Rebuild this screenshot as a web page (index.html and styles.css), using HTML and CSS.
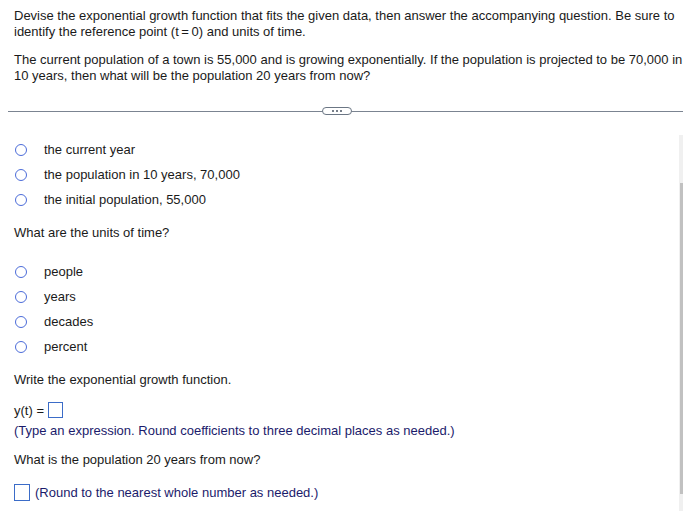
FILE: index.html
```html
<!DOCTYPE html>
<html>
<head>
<meta charset="utf-8">
<link rel="stylesheet" href="styles.css">
</head>
<body>
<div class="page">
  <p class="txt p1">Devise the exponential growth function that fits the given data, then answer the accompanying question. Be sure to identify the reference point (t&thinsp;=&thinsp;0) and units of time.</p>
  <p class="txt p2">The current population of a town is 55,000 and is growing exponentially. If the population is projected to be 70,000 in 10 years, then what will be the population 20 years from now?</p>
  <div class="sep"><span class="pill"><i></i><i></i><i></i></span></div>
  <div class="answer">
    <ul class="radios r1">
      <li><span class="radio"></span>the current year</li>
      <li><span class="radio"></span>the population in 10 years, 70,000</li>
      <li><span class="radio"></span>the initial population, 55,000</li>
    </ul>
    <p class="txt q">What are the units of time?</p>
    <ul class="radios r2">
      <li><span class="radio"></span>people</li>
      <li><span class="radio"></span>years</li>
      <li><span class="radio"></span>decades</li>
      <li><span class="radio"></span>percent</li>
    </ul>
    <p class="txt q">Write the exponential growth function.</p>
    <div class="fn-row"><span class="fn">y(t) =</span><span class="box"></span></div>
    <p class="txt hint">(Type an expression. Round coefficients to three decimal places as needed.)</p>
    <p class="txt q q3">What is the population 20 years from now?</p>
    <div class="ans-row"><span class="box box2"></span><span class="hint">(Round to the nearest whole number as needed.)</span></div>
  </div>
  <div class="scroll"><div class="thumb"></div></div>
</div>
</body>
</html>
```
FILE: styles.css
```css
html, body {
  margin: 0;
  padding: 0;
  background: #fff;
}
.page {
  position: relative;
  width: 683px;
  height: 522px;
  overflow: hidden;
  font-family: "Liberation Sans", Arial, sans-serif;
  font-size: 13px;
  color: #1a1a1a;
  padding-top: 8px;
  box-sizing: border-box;
}
.txt {
  margin: 0;
  line-height: 16px;
  padding-left: 14px;
}
.p1 {
  padding-right: 6px;
}
.p2 {
  margin-top: 12px;
  width: 672px;
}
.sep {
  margin-top: 27px;
  margin-left: 8px;
  height: 1px;
  background: #7b8491;
  position: relative;
}
.pill {
  position: absolute;
  left: 314px;
  top: -4px;
  width: 28px;
  height: 6px;
  border: 1.5px solid #6b7684;
  border-radius: 5px;
  background: #fff;
  display: flex;
  justify-content: center;
  align-items: center;
  gap: 2px;
}
.pill i {
  width: 2px;
  height: 2px;
  background: #4a5563;
  border-radius: 1px;
}
.radios {
  list-style: none;
  margin: 0;
  padding: 0;
}
.r1 {
  margin-top: 25px;
}
.r2 {
  margin-top: 18px;
}
.radios li {
  height: 25px;
  display: flex;
  align-items: center;
  padding-left: 15px;
}
.radio {
  width: 10px;
  height: 10px;
  border: 1.5px solid #4c6cd9;
  border-radius: 50%;
  margin-right: 17px;
  flex: none;
}
.q {
  margin-top: 13px;
}
.fn-row {
  margin-top: 13px;
  padding-left: 14px;
  display: flex;
  align-items: center;
  height: 18px;
}
.fn {
  margin-right: 4px;
}
.box {
  width: 13px;
  height: 14px;
  border: 1.5px solid #3b6cc8;
  display: inline-block;
}
.hint {
  color: #1b1b6b;
}
.txt.hint {
  margin-top: 4px;
}
.ans-row {
  margin-top: 15px;
  padding-left: 14px;
  display: flex;
  align-items: center;
  height: 18px;
}
.box2 {
  width: 14px;
  height: 15px;
  margin-right: 5px;
}
.scroll {
  position: absolute;
  left: 679px;
  top: 135px;
  width: 4px;
  height: 376px;
  background: #f0f0f0;
}
.thumb {
  position: absolute;
  left: 1px;
  top: 48px;
  width: 3px;
  height: 311px;
  background: #c1c1c1;
}
```
